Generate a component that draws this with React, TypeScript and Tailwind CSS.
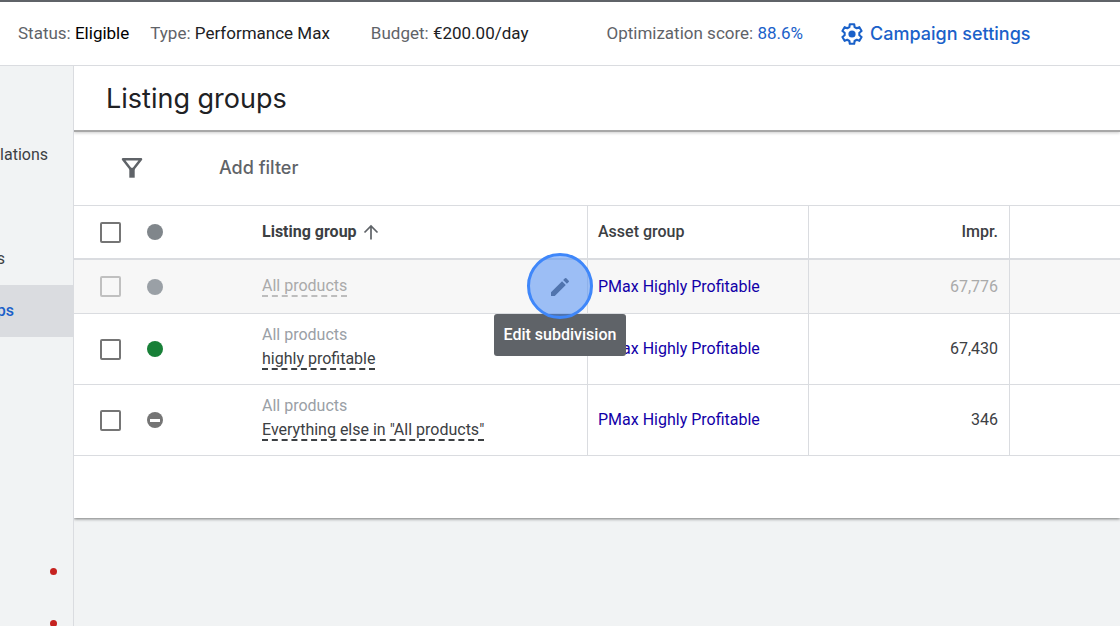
import React from "react";

const cell = "border-b border-[#dadce0] p-0";
const divided = "border-r border-[#dadce0]";

function FilterIcon() {
  return (
    <svg viewBox="0 0 22 22" className="size-[22px]" fill="none" stroke="#5f6368" aria-hidden="true">
      <path d="M2 2.200h18L12.400 12H9.600z" strokeWidth="2.500" strokeLinejoin="round" />
      <path d="M11 11v9.700" strokeWidth="5.400" />
    </svg>
  );
}

// One tooth of the gear, repeated six times around the centre.
const tooth = [[-2.6, -7], [-2.2, -9.8], [2.2, -9.8], [2.6, -7]];
const gearPoints = [0, 1, 2, 3, 4, 5]
  .flatMap((k) => {
    const a = (k * Math.PI) / 3;
    return tooth.map(([x, y]) => `${12 + x * Math.cos(a) - y * Math.sin(a)},${12 + x * Math.sin(a) + y * Math.cos(a)}`);
  })
  .join(" ");

function GearIcon() {
  return (
    <svg viewBox="0 0 24 24" className="size-6" fill="none" aria-hidden="true">
      <polygon points={gearPoints} stroke="#1a61c9" strokeWidth="2.100" strokeLinejoin="round" />
      <circle cx="12" cy="12" r="3.600" fill="#1a61c9" />
    </svg>
  );
}

function PencilIcon() {
  return (
    <svg viewBox="0 0 24 24" className="size-6" fill="#5f6368" aria-hidden="true">
      <path d="M3 17.250V21h3.750L17.810 9.940l-3.750-3.750L3 17.250zM20.710 7.040a1 1 0 0 0 0-1.410l-2.340-2.340a1 1 0 0 0-1.410 0l-1.830 1.830 3.750 3.750 1.830-1.830z" />
    </svg>
  );
}

function SortIcon() {
  return (
    <svg viewBox="0 0 16 16" className="size-4" fill="none" stroke="#5f6368" strokeWidth="1.700" aria-hidden="true">
      <path d="M8 15.500V2M1.500 8.500L8 2l6.500 6.500" />
    </svg>
  );
}

function Tick({ label, disabled = false }: { label: string; disabled?: boolean }) {
  return (
    <input
      type="checkbox"
      aria-label={label}
      disabled={disabled}
      className="ml-[26px] block size-[21px] appearance-none rounded-[2px] border-2 border-[#757575] checked:bg-[#757575] disabled:border-[#c0c0c0]"
    />
  );
}

function Dot({ kind }: { kind: "all" | "muted" | "on" | "off" }) {
  if (kind === "off") {
    return (
      <span className="ml-[11px] flex size-4 items-center justify-center rounded-full bg-[#757575]">
        <span className="h-[3px] w-2.5 bg-white" />
      </span>
    );
  }
  const tone = { all: "bg-[#80868b]", muted: "bg-[#9aa0a6]", on: "bg-[#188038]" }[kind];
  return <span className={`ml-[11px] block size-4 rounded-full ${tone}`} />;
}

function Stat({ label, children, tone = "text-[#202124]" }: { label: string; children: React.ReactNode; tone?: string }) {
  return (
    <span className="text-[17px] whitespace-nowrap text-[#5f6368]">
      {label} <span className={tone}>{children}</span>
    </span>
  );
}

const rows = [
  { name: "highly profitable", kind: "on" as const, impressions: "67,430" },
  { name: 'Everything else in "All products"', kind: "off" as const, impressions: "346" },
];

const nav = ["lations", "", "s", "ps", "", "", "", ""];

export default function App() {
  return (
    <div className="flex h-screen flex-col overflow-hidden bg-white font-['Roboto',sans-serif] text-base text-[#3c4043]">
      <header className="flex h-[66px] shrink-0 items-center border-t-2 border-b border-t-[#5f6368] border-b-[#dadce0] pl-[18px]">
        <Stat label="Status:" tone="text-black">Eligible</Stat>
        <span className="ml-[21px]"><Stat label="Type:">Performance Max</Stat></span>
        <span className="ml-[41px]"><Stat label="Budget:">€200.00/day</Stat></span>
        <span className="ml-[78px]"><Stat label="Optimization score:" tone="text-[#1a61c9]">88.6%</Stat></span>
        <a href="#settings" className="ml-[37px] flex items-center gap-1.5 text-lg font-medium whitespace-nowrap text-[#1a61c9] font-['Google_Sans','Inter',sans-serif]">
          <GearIcon />
          Campaign settings
        </a>
      </header>

      <div className="flex min-h-0 flex-1">
        <nav className="w-[74px] shrink-0 overflow-hidden border-r border-[#dadce0] bg-[#f1f3f4] pt-[63px]">
          {nav.map((text, i) => (
            <div key={i} className={`flex h-[52px] items-center ${text === "ps" ? "bg-[#dadce0] font-medium text-[#1a61c9]" : ""}`}>
              {text && (
                <a href="#section" className={`flex justify-end ${text === "lations" ? "w-12" : text === "ps" ? "w-3.5" : "w-[5px]"}`}>
                  {text}
                </a>
              )}
            </div>
          ))}
          {[0, 1].map((i) => (
            <div key={i} className="flex h-[52px] items-center justify-end pr-4">
              <span className="size-[7px] rounded-full bg-[#c5221f]" />
            </div>
          ))}
        </nav>

        <main className="min-w-0 flex-1 overflow-hidden bg-[#f1f3f4]">
          <section className="bg-white shadow-[0_1px_3px_rgba(0,0,0,0.5)]">
            <h1 className="flex h-[66px] items-center border-b-2 border-[#a8a8a8] pt-0.5 pl-8 text-[27px] text-[#202124] shadow-[0_1px_3px_rgba(0,0,0,0.2)] font-['Google_Sans','Inter',sans-serif]">
              Listing groups
            </h1>
            <div className="flex h-[73px] items-center pb-0.5 pl-[47px]">
              <button type="button" aria-label="Filter"><FilterIcon /></button>
              <button type="button" className="ml-[76px] text-lg font-medium text-[#5f6368] font-['Google_Sans','Inter',sans-serif]">Add filter</button>
            </div>
            <table className="w-full table-fixed border-separate border-spacing-0 border-t border-[#dadce0]">
              <colgroup>
                <col className="w-[62px]" />
                <col className="w-[115px]" />
                <col className="w-[337px]" />
                <col className="w-[221px]" />
                <col className="w-[201px]" />
                <col />
              </colgroup>
              <thead>
                <tr className="h-[54px] text-left *:border-b-2 *:border-[#dadce0] *:p-0">
                  <th><Tick label="Select all" /></th>
                  <th><Dot kind="all" /></th>
                  <th className="border-r">
                    <button type="button" className="ml-[11px] flex items-center gap-1.5 font-bold">Listing group <SortIcon /></button>
                  </th>
                  <th className="border-r font-medium"><span className="ml-2.5">Asset group</span></th>
                  <th className="border-r text-right font-medium"><span className="mr-[11px]">Impr.</span></th>
                  <td />
                </tr>
              </thead>
              <tbody>
                <tr className="h-[54px] bg-[#f7f7f7]">
                  <td className={cell}><Tick label="All products" disabled /></td>
                  <td className={cell}><Dot kind="muted" /></td>
                  <td className={`${cell} ${divided}`}>
                    <div className="relative flex items-center justify-between pr-[15px] pl-[11px]">
                      <span className="border-b-2 border-dashed border-[#bdbdbd] leading-[18px] text-[#aaaaaa]">All products</span>
                      <button type="button" aria-label="Edit subdivision" className="size-6"><PencilIcon /></button>
                      <div role="tooltip" className="absolute top-[39px] -right-[39px] z-10 flex h-[42px] w-[132px] items-center justify-center rounded-[3px] bg-[#5f6368] font-medium whitespace-nowrap text-white">
                        Edit subdivision
                      </div>
                      <div className="pointer-events-none absolute -top-[22px] -right-1.5 z-20 size-[66px] rounded-full border-3 border-[#3f87fa] bg-[#4285f4]/50" />
                    </div>
                  </td>
                  <td className={`${cell} ${divided}`}><a href="#asset" className="ml-2.5 text-[#1200a8]">PMax Highly Profitable</a></td>
                  <td className={`${cell} ${divided} text-right`}><span className="mr-[11px] text-[#aaaaaa]">67,776</span></td>
                  <td className={cell} />
                </tr>
                {rows.map((row) => (
                  <tr key={row.name} className="h-[71px]">
                    <td className={cell}><Tick label={row.name} /></td>
                    <td className={cell}><Dot kind={row.kind} /></td>
                    <td className={`${cell} ${divided}`}>
                      <div className="flex flex-col items-start gap-[5px] pb-[3px] pl-[11px]">
                        <span className="leading-5 text-[#9aa0a6]">All products</span>
                        <a href="#group" className="border-b-2 border-dashed border-[#3c4043] leading-[18px]">{row.name}</a>
                      </div>
                    </td>
                    <td className={`${cell} ${divided}`}><a href="#asset" className="ml-2.5 text-[#1200a8]">PMax Highly Profitable</a></td>
                    <td className={`${cell} ${divided} text-right`}><span className="mr-[11px]">{row.impressions}</span></td>
                    <td className={cell} />
                  </tr>
                ))}
              </tbody>
            </table>
            <div className="h-[62px]" />
          </section>
        </main>
      </div>
    </div>
  );
}
